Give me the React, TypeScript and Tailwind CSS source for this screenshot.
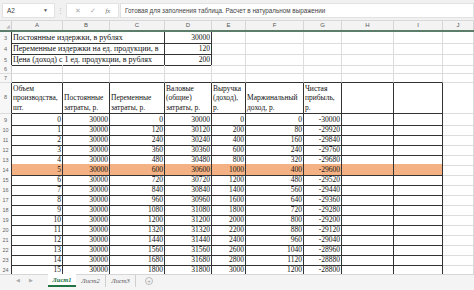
import React from 'react';

// column widths: row header, A..J
const COLS = 'grid grid-cols-[12px_51px_47px_55px_47px_34px_58px_38px_52px_49px_1fr]';
const light = 'border-r border-b border-[#dcdcdc]';
const dark = 'border-r border-b border-[#333]';

const RowHead = ({ n, edge }: { n: number; edge?: boolean }) => (
    <div
        className={`flex items-center justify-center bg-[#f7f7f7] text-[5.5px] text-[#666] font-['Liberation_Sans',Arial,sans-serif] border-b border-[#dcdcdc] border-r ${edge ? 'border-r-[#333]' : 'border-r-[#d0d0d0]'}`}
    >
        {n}
    </div>
);

const Num = ({ v, hl }: { v: number | string; hl?: boolean }) => (
    <div className={`${dark} flex items-center justify-end pr-[1px] ${hl ? 'bg-[#f4b183]' : ''}`}>{v}</div>
);

const Empty = ({ count, cls }: { count: number; cls: string }) => (
    <>
        {Array.from({ length: count }).map((_, i) => (
            <div key={i} className={cls} />
        ))}
    </>
);

const headers = ['A', 'B', 'C', 'D', 'E', 'F', 'G', 'H', 'I', 'J'];

const topRows = [
    { n: 3, label: 'Постоянные издержки, в рублях', v: 30000 },
    { n: 4, label: 'Переменные издержки на ед. продукции, в', v: 120 },
    { n: 5, label: 'Цена (доход) с 1 ед. продукции, в рублях', v: 200 },
];

export default function App() {
    const data = Array.from({ length: 16 }).map((_, i) => ({
        row: 9 + i,
        a: i,
        b: 30000,
        c: 120 * i,
        d: 30000 + 120 * i,
        e: 200 * i,
        f: 80 * i,
        g: 80 * i - 30000,
    }));

    return (
        <div className="w-[474px] h-[290px] overflow-hidden bg-white flex flex-col font-['Liberation_Serif',serif] text-[7.5px] text-[#111]">
            {/* formula bar */}
            <div className="h-[21px] shrink-0 bg-[#f1f1f1] border-b border-[#d9d9d9] flex items-center pt-[1px] font-['Liberation_Sans',Arial,sans-serif] text-[6.5px] text-[#444]">
                <div className="ml-[2px] w-[53px] h-[15px] bg-white border border-[#e2e2e2] flex items-center justify-between pl-[4px] pr-[6px]">
                    <span>A2</span>
                    <span className="text-[5px] text-[#555]">▼</span>
                </div>
                <div className="w-[11px] text-center text-[#bbb]">⋮</div>
                <div className="w-[53px] h-[15px] bg-white border border-[#e2e2e2] flex items-center justify-around px-[3px] text-[#aaa]">
                    <span>✕</span>
                    <span>✓</span>
                    <span className="italic text-[#666] font-['Liberation_Serif',serif]">fx</span>
                </div>
                <div className="flex-1 ml-[1px] h-[15px] bg-white border border-[#e2e2e2] flex items-center pl-[4px] whitespace-nowrap text-[6.3px]">
                    Готовая для заполнения таблица. Расчет в натуральном выражении
                </div>
            </div>

            {/* column headers */}
            <div className={`${COLS} h-[11px] shrink-0 bg-[#f3f3f3] border-b-2 border-[#5d7d6b] font-['Liberation_Sans',Arial,sans-serif] text-[6px] text-[#555]`}>
                <div className="border-r border-[#d0d0d0] flex items-end justify-end">
                    <span className="text-[5px] text-[#bbb] pr-[1px]">◢</span>
                </div>
                {headers.map((h) => (
                    <div key={h} className="border-r border-[#d6d6d6] flex items-center justify-center">
                        {h}
                    </div>
                ))}
            </div>

            {/* rows 3-5 */}
            {topRows.map((r) => (
                <div key={r.n} className={`${COLS} h-[11px] shrink-0`}>
                    <RowHead n={r.n} edge />
                    <div className={`${dark} col-span-3 flex items-center pl-[1px] whitespace-nowrap overflow-hidden text-[8px]`}>{r.label}</div>
                    <Num v={r.v} />
                    <Empty count={6} cls={light} />
                </div>
            ))}

            {/* rows 6-7 */}
            {[6, 7].map((n) => (
                <div key={n} className={`${COLS} h-[9px] shrink-0`}>
                    <RowHead n={n} />
                    <Empty count={n === 7 ? 9 : 10} cls={n === 7 ? 'border-r border-b border-r-[#dcdcdc] border-b-[#333]' : light} />
                    {n === 7 && <div className={light} />}
                </div>
            ))}

            {/* row 8: table header */}
            <div className={`${COLS} h-[31px] shrink-0 leading-[9.5px]`}>
                <RowHead n={8} edge />
                <div className={`${dark} flex flex-col justify-end pl-[1px] pb-[1px]`}>
                    <span>Объем</span>
                    <span>производства,</span>
                    <span>шт.</span>
                </div>
                <div className={`${dark} flex flex-col justify-end pl-[1px] pb-[1px]`}>
                    <span>Постоянные</span>
                    <span>затраты, р.</span>
                </div>
                <div className={`${dark} flex flex-col justify-end pl-[1px] pb-[1px]`}>
                    <span>Переменные</span>
                    <span>затраты, р.</span>
                </div>
                <div className={`${dark} flex flex-col justify-end pl-[1px] pb-[1px]`}>
                    <span>Валовые</span>
                    <span>(общие)</span>
                    <span>затраты, р.</span>
                </div>
                <div className={`${dark} flex flex-col justify-end pl-[1px] pb-[1px] whitespace-nowrap overflow-hidden`}>
                    <span>Выручка</span>
                    <span>(доход),</span>
                    <span>р.</span>
                </div>
                <div className={`${dark} flex flex-col justify-end pl-[1px] pb-[1px]`}>
                    <span>Маржинальный</span>
                    <span>доход, р.</span>
                </div>
                <div className={`${dark} flex flex-col justify-end pl-[1px] pb-[1px]`}>
                    <span>Чистая</span>
                    <span>прибыль,</span>
                    <span>р.</span>
                </div>
                <div className={dark} />
                <div className={dark} />
                <div className={light} />
            </div>

            {/* rows 9-24 */}
            {data.map((r) => {
                const hl = r.row === 14;
                return (
                    <div key={r.row} className={`${COLS} h-[10px] shrink-0`}>
                        <RowHead n={r.row} edge />
                        <Num v={r.a} hl={hl} />
                        <Num v={r.b} hl={hl} />
                        <Num v={r.c} hl={hl} />
                        <Num v={r.d} hl={hl} />
                        <Num v={r.e} hl={hl} />
                        <Num v={r.f} hl={hl} />
                        <Num v={r.g} hl={hl} />
                        <div className={`${dark} ${hl ? 'bg-[#f4b183]' : ''}`} />
                        <div className={`${dark} ${hl ? 'bg-[#f4b183]' : ''}`} />
                        <div className={light} />
                    </div>
                );
            })}

            {/* sheet tabs */}
            <div className="flex-1 bg-[#f4f4f4] border-t border-[#d6d6d6] flex items-start font-['Liberation_Sans',Arial,sans-serif] text-[6px] text-[#555]">
                <div className="w-[48px] h-[12px] flex items-center justify-center gap-[9px] text-[#aaa] text-[5px]">
                    <span>◀</span>
                    <span>▶</span>
                </div>
                <div className="h-[13px] w-[28px] -mt-[1px] bg-white border-b-2 border-[#217346] flex items-center justify-center font-bold italic text-[#217346] font-['Liberation_Serif',serif] text-[6.5px]">
                    Лист1
                </div>
                <div className="h-[12px] w-[30px] border-r border-[#cfcfcf] flex items-center justify-center italic font-['Liberation_Serif',serif] text-[6.5px]">
                    Лист2
                </div>
                <div className="h-[12px] w-[30px] border-r border-[#cfcfcf] flex items-center justify-center italic font-['Liberation_Serif',serif] text-[6.5px]">
                    Лист3
                </div>
                <div className="h-[12px] w-[26px] flex items-center justify-center">
                    <span className="w-[8px] h-[8px] rounded-full border border-[#bbb] text-[#999] text-[6px] leading-none flex items-center justify-center">+</span>
                </div>
            </div>
        </div>
    );
}
